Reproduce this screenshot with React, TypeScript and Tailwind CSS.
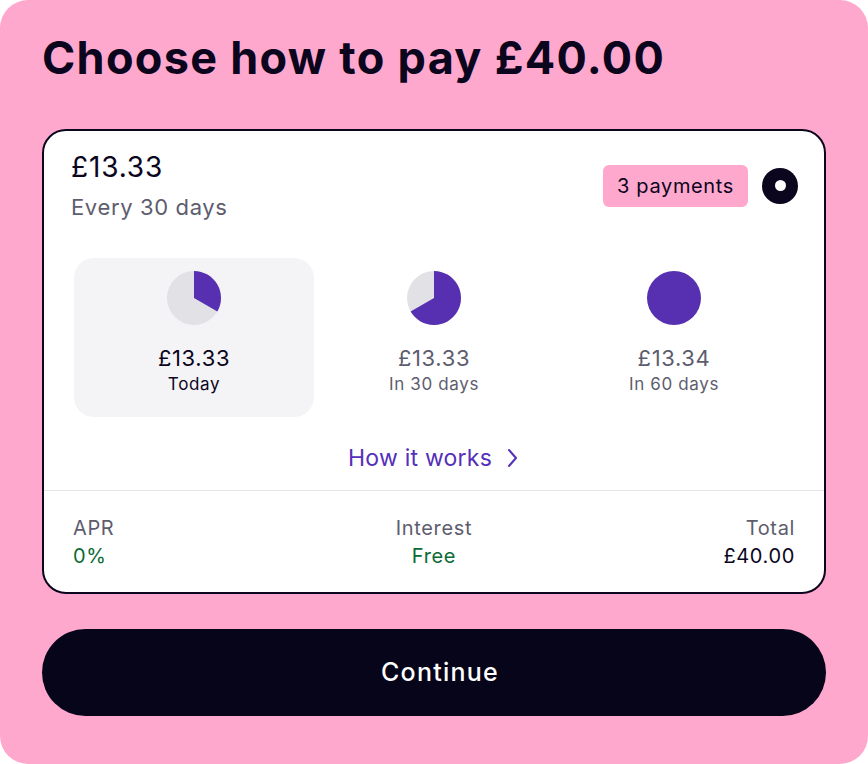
import React from "react";

const PURPLE = "#5630b0";
const GREY = "#e1e1e6";

function Pie({ part }: { part: number }) {
  const r = 27;
  if (part >= 1) {
    return (
      <svg width="54" height="54" viewBox="0 0 54 54">
        <circle cx="27" cy="27" r={r} fill={PURPLE} />
      </svg>
    );
  }
  const a = part * 2 * Math.PI;
  const x = 27 + r * Math.sin(a);
  const y = 27 - r * Math.cos(a);
  const large = part > 0.5 ? 1 : 0;
  return (
    <svg width="54" height="54" viewBox="0 0 54 54">
      <circle cx="27" cy="27" r={r} fill={GREY} />
      <path d={`M27 27 L27 0 A27 27 0 ${large} 1 ${x} ${y} Z`} fill={PURPLE} />
    </svg>
  );
}

const schedule = [
  { amount: "£13.33", when: "Today", part: 1 / 3, active: true },
  { amount: "£13.33", when: "In 30 days", part: 2 / 3, active: false },
  { amount: "£13.34", when: "In 60 days", part: 1, active: false },
];

export default function App() {
  return (
    <div
      className="w-[868px] h-[764px] bg-white"
      style={{ fontFamily: "Inter, 'Noto Sans', sans-serif" }}
    >
      <div className="h-full rounded-[28px] bg-[#ffa8cd] px-[42px] pt-[31px] pb-[48px] flex flex-col text-[#0b051d]">
        <h1 className="text-[45px] leading-[54px] font-bold tracking-[1.3px]">
          Choose how to pay £40.00
        </h1>

        <div className="mt-[44px] bg-white border-2 border-[#0b051d] rounded-[24px] flex flex-col tracking-[0.04em]">
          <div className="flex items-center justify-between pl-[27px] pr-[26px] pt-[19px]">
            <div>
              <div className="text-[28px] leading-[34px] tracking-[0.03em]">£13.33</div>
              <div className="mt-[9px] text-[22px] leading-[28px] text-[#5d5d6e]">Every 30 days</div>
            </div>
            <div className="flex items-center gap-[14px]">
              <span className="bg-[#ffa8cd] rounded-[6px] h-[42px] px-[14px] flex items-center text-[20px]">
                3 payments
              </span>
              <span className="w-[36px] h-[36px] rounded-full bg-[#0b051d] flex items-center justify-center">
                <span className="w-[11px] h-[11px] rounded-full bg-white" />
              </span>
            </div>
          </div>

          <div className="mt-[37px] px-[30px] grid grid-cols-3">
            {schedule.map((s, i) => (
              <div
                key={i}
                className={`flex flex-col items-center pt-[13px] pb-[22px] rounded-[20px] ${s.active ? "bg-[#f4f4f6]" : ""}`}
              >
                <Pie part={s.part} />
                <div className={`mt-[19px] text-[22px] leading-[28px] ${s.active ? "text-[#0b051d]" : "text-[#5d5d6e]"}`}>
                  {s.amount}
                </div>
                <div className={`mt-[1px] text-[17px] leading-[22px] ${s.active ? "text-[#0b051d]" : "text-[#5d5d6e]"}`}>
                  {s.when}
                </div>
              </div>
            ))}
          </div>

          <div className="mt-[27px] pb-[18px] flex justify-center items-center gap-[12px] text-[23px] leading-[28px] tracking-[0.01em] text-[#5530b8]">
            How it works
            <svg width="16" height="20" viewBox="0 0 16 20" fill="none">
              <path d="M5 2 L12 10 L5 18" stroke="#5530b8" strokeWidth="2" strokeLinecap="round" strokeLinejoin="round" />
            </svg>
          </div>

          <div className="border-t border-[#e6e6ea] px-[29px] pt-[25px] pb-[23px] grid grid-cols-3">
            <div>
              <div className="text-[20px] leading-[24px] text-[#5d5d6e]">APR</div>
              <div className="mt-[3px] text-[20px] leading-[26px] text-[#0b6b35]">0%</div>
            </div>
            <div className="text-center">
              <div className="text-[20px] leading-[24px] text-[#5d5d6e]">Interest</div>
              <div className="mt-[3px] text-[20px] leading-[26px] text-[#0b6b35]">Free</div>
            </div>
            <div className="text-right">
              <div className="text-[20px] leading-[24px] text-[#5d5d6e]">Total</div>
              <div className="mt-[3px] text-[20px] leading-[26px]">£40.00</div>
            </div>
          </div>
        </div>

        <button className="mt-[35px] h-[88px] w-full rounded-full bg-[#07051a] text-white text-[25px] font-medium tracking-[0.05em] pl-[12px]">
          Continue
        </button>
      </div>
    </div>
  );
}
